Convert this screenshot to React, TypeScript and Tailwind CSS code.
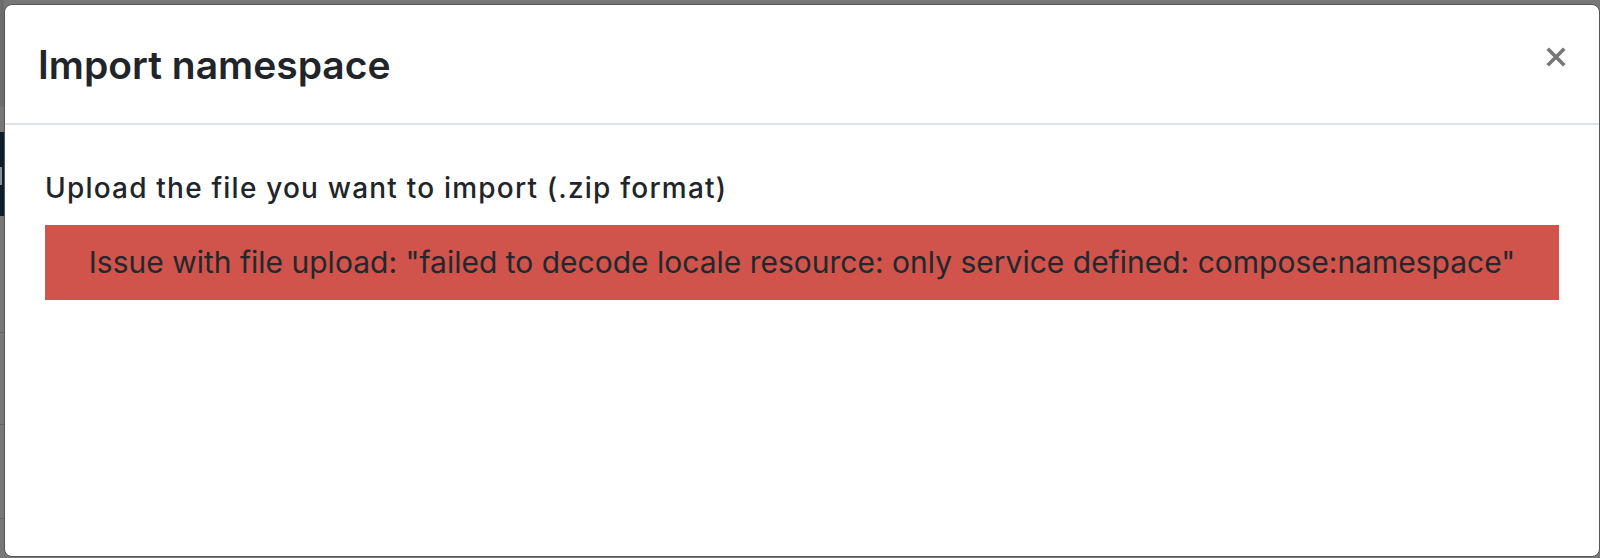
export default function App() {
  return (
    <div className="relative h-[558px] w-[1600px] overflow-hidden bg-[#777777] font-['Inter',sans-serif]">
      {/* page behind the backdrop, only a sliver shows at the left edge */}
      <div className="flex h-full w-[4px] flex-col">
        <div className="h-[107px] bg-[#6d6d6d]" />
        <div className="h-[25px] bg-[#777777]" />
        <div className="flex h-[84px] flex-col bg-[#0d1d29] pt-[35px]">
          <div className="h-[18px] w-[2px] bg-[#8a8f93]" />
        </div>
        <div className="h-[116px]" />
        <div className="h-px bg-[#666666]" />
        <div className="h-[91px]" />
        <div className="h-px bg-[#666666]" />
        <div className="h-[93px]" />
        <div className="h-px bg-[#666666]" />
      </div>

      {/* modal */}
      <div className="absolute left-[4px] top-[4px] right-0 bottom-[1px] flex flex-col rounded-[8px] border border-[#555555] bg-white">
        <div className="flex h-[120px] items-center justify-between border-b-2 border-[#dee2e6] pl-[33px] pr-[33px]">
          <h5 className="text-[39px] font-semibold leading-none text-[#212529]">Import namespace</h5>
          <button className="mb-[14px] text-[#777777]" aria-label="Close">
            <svg width="20" height="20" viewBox="0 0 20 20">
              <path d="M3 3 L17 17 M17 3 L3 17" stroke="currentColor" strokeWidth="3.6" strokeLinecap="square" />
            </svg>
          </button>
        </div>
        <div className="flex flex-col px-[40px] pt-[47px]">
          <label className="text-[28px] font-medium leading-[32px] tracking-[1.2px] text-[#212529]">
            Upload the file you want to import (.zip format)
          </label>
          <div className="mt-[21px] flex h-[75px] items-center justify-center bg-[#d0534c] text-[30px] text-[#23282c]">
            Issue with file upload: "failed to decode locale resource: only service defined: compose:namespace"
          </div>
        </div>
      </div>
    </div>
  );
}
